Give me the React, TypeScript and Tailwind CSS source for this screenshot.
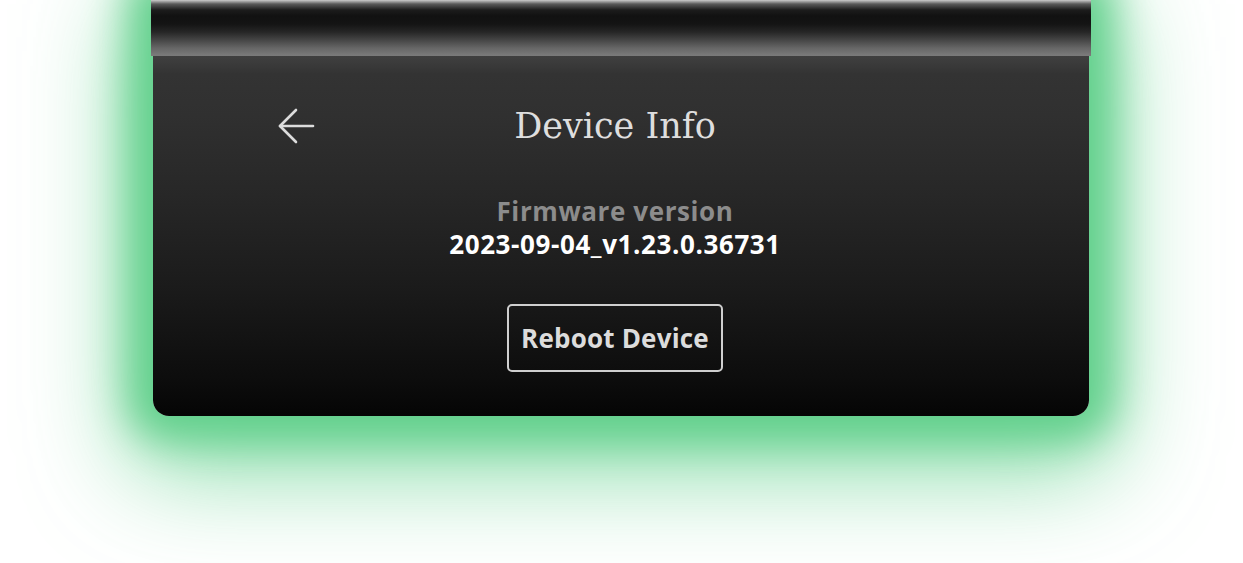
import React from 'react';

function BackArrow() {
  return (
    <svg width="38" height="36" viewBox="0 0 38 36" fill="none" stroke="#dcdcdc" strokeWidth="2.6" strokeLinecap="round" strokeLinejoin="round">
      <path d="M19 2 3 18l16 16" />
      <path d="M3 18h33" />
    </svg>
  );
}

export default function App() {
  return (
    <div className="w-[1243px] h-[563px] bg-white overflow-hidden" style={{ fontFamily: '"Open Sans", "Noto Sans", sans-serif' }}>
      <div className="ml-[153px] w-[936px] h-[416px] rounded-b-2xl shadow-[0_0_40px_24px_rgba(98,208,140,1),0_30px_100px_26px_rgba(98,208,140,0.75)] flex flex-col">
        {/* top bezel */}
        <div className="-mx-[2px] h-[56px] bg-[linear-gradient(to_bottom,#cccccc_0px,#5a5a5a_4px,#1c1c1c_10px,#111111_16px,#141414_24px,#262626_32px,#454545_40px,#666666_48px,#7a7a7a_55px)]" />

        {/* screen */}
        <div className="flex-1 rounded-b-2xl bg-[linear-gradient(to_bottom,#404040_0px,#333333_18px,#303030_60px,#272727_140px,#1b1b1b_230px,#0d0d0d_320px,#050505_360px)]">
          <div className="grid grid-cols-[1fr_auto_1fr] items-center h-[50px] mt-[44px] pr-3">
            <div className="pl-[124px] flex">
              <BackArrow />
            </div>
            <div className="text-[35px] text-[#dedede]" style={{ fontFamily: '"DejaVu Serif", serif' }}>
              Device Info
            </div>
            <div />
          </div>

          <div className="flex flex-col items-center pr-3 mt-[44px]">
            <div className="text-[26px] leading-[35px] font-bold tracking-[0.6px] text-[#8c8c8c]">Firmware version</div>
            <div className="-mt-[2px] text-[26px] leading-[35px] font-bold tracking-[0.6px] text-white">2023-09-04_v1.23.0.36731</div>
            <button className="mt-[42px] h-[68px] px-[12px] border-2 border-[#cfcfcf] rounded-[5px] text-[26px] font-bold tracking-[0.2px] text-[#dcdcdc]">
              Reboot Device
            </button>
          </div>
        </div>
      </div>
    </div>
  );
}
